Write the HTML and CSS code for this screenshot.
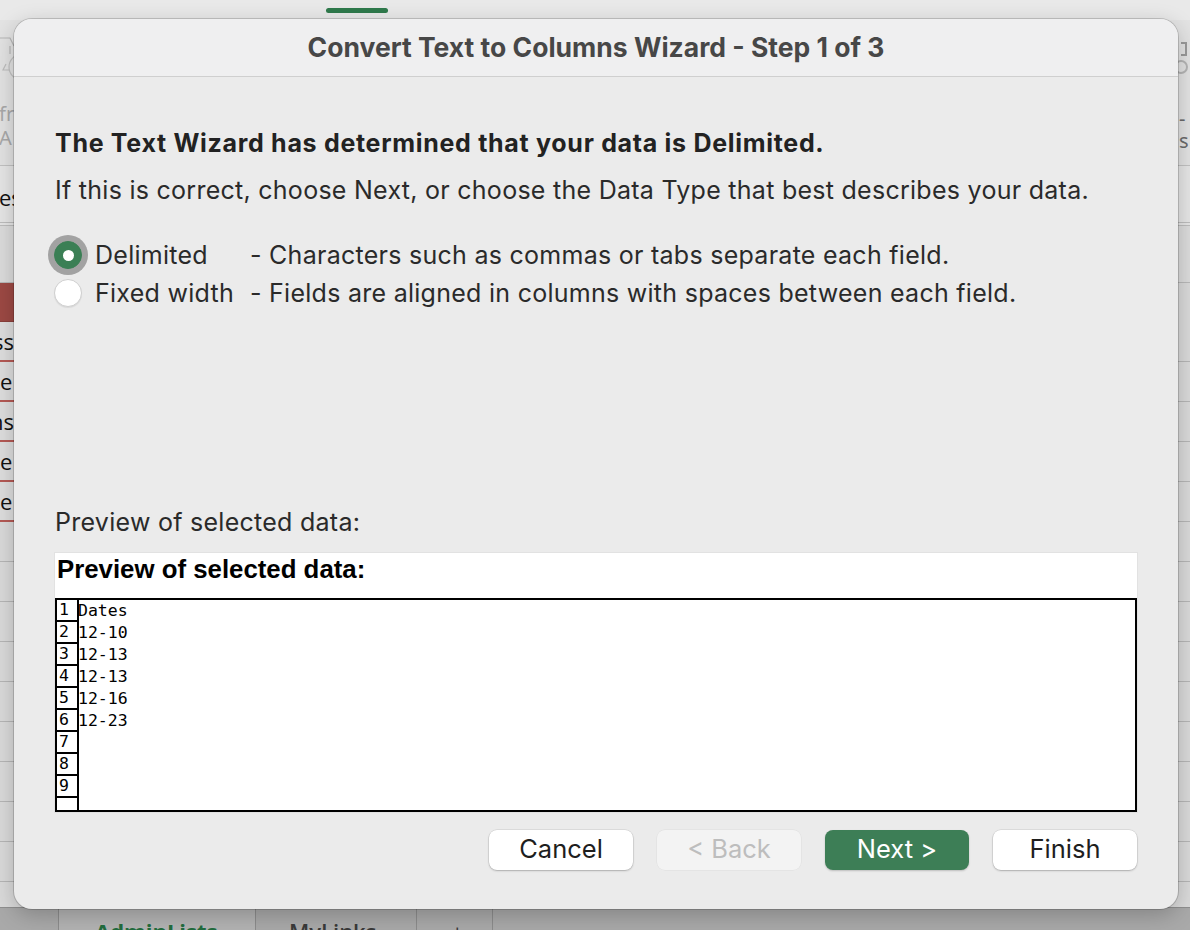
FILE: index.html
```html
<!DOCTYPE html>
<html lang="en">
<head>
<meta charset="utf-8">
<title>Convert Text to Columns Wizard</title>
<link rel="stylesheet" href="styles.css">
</head>
<body>
<div class="app">
  <div class="topbar"><span class="sheet-tab-mark"></span></div>
  <div class="ribbon">
    <div class="ribbon-left">
      <svg class="rib-icon" width="14" height="56" viewBox="0 0 14 56"><path d="M-4 4h14l4 8" fill="none" stroke="#b5b5b5" stroke-width="1.2"/><path d="M10 12v8" fill="none" stroke="#b5b5b5" stroke-width="1.2"/><circle cx="22" cy="33" r="13" fill="none" stroke="#c0c0c0" stroke-width="1.2"/><path d="M6 30l-3 6 6 0" fill="none" stroke="#bdbdbd" stroke-width="1.2"/></svg>
      <span class="rib-text">fr</span>
      <span class="rib-text">A</span>
    </div>
    <div class="ribbon-right">
      <span class="rib-bracket"></span>
      <span class="rib-circle"></span>
      <span class="rib-text2 rib-dash">-</span>
      <span class="rib-text2">s</span>
    </div>
  </div>
  <div class="formula"><span class="namebox">es</span></div>
  <div class="colhead"></div>
  <div class="row row-red"><span class="cell cell-red"></span><span class="cell-r"></span></div>
  <div class="row"><span class="cell cell-u">ss</span><span class="cell-r"></span></div>
  <div class="row"><span class="cell cell-u">e</span><span class="cell-r"></span></div>
  <div class="row"><span class="cell cell-u">ns</span><span class="cell-r"></span></div>
  <div class="row"><span class="cell cell-u">e</span><span class="cell-r"></span></div>
  <div class="row"><span class="cell cell-u">e</span><span class="cell-r"></span></div>
  <div class="row"><span class="cell"></span><span class="cell-r"></span></div>
  <div class="row"><span class="cell"></span><span class="cell-r"></span></div>
  <div class="row"><span class="cell"></span><span class="cell-r"></span></div>
  <div class="row"><span class="cell"></span><span class="cell-r"></span></div>
  <div class="row"><span class="cell"></span><span class="cell-r"></span></div>
  <div class="row"><span class="cell"></span><span class="cell-r"></span></div>
  <div class="row"><span class="cell"></span><span class="cell-r"></span></div>
  <div class="row"><span class="cell"></span><span class="cell-r"></span></div>
  <div class="row"><span class="cell"></span><span class="cell-r"></span></div>
  <div class="row row-last"><span class="cell"></span><span class="cell-r"></span></div>
  <div class="tabbar">
    <span class="tab tab-first"></span>
    <span class="tab tab-active">AdminLists</span>
    <span class="tab tab-links">MyLinks</span>
    <span class="tab tab-plus">+</span>
  </div>
</div>

<div class="dialog">
  <div class="titlebar">Convert Text to Columns Wizard - Step 1 of 3</div>
  <div class="dlg-body">
    <p class="heading">The Text Wizard has determined that your data is Delimited.</p>
    <p class="text sub">If this is correct, choose Next, or choose the Data Type that best describes your data.</p>
    <div class="options">
      <div class="option">
        <span class="radio radio-on"><span class="dot"></span></span>
        <span class="text opt-label">Delimited</span>
        <span class="text">- Characters such as commas or tabs separate each field.</span>
      </div>
      <div class="option">
        <span class="radio"></span>
        <span class="text opt-label">Fixed width</span>
        <span class="text">- Fields are aligned in columns with spaces between each field.</span>
      </div>
    </div>
    <p class="text preview-label">Preview of selected data:</p>
    <div class="preview">
      <div class="preview-head">Preview of selected data:</div>
      <div class="preview-table">
        <div class="nums">
          <span class="num">1</span><span class="num">2</span><span class="num">3</span><span class="num">4</span><span class="num">5</span><span class="num">6</span><span class="num">7</span><span class="num">8</span><span class="num">9</span><span class="num num-empty"></span>
        </div>
        <div class="data">
          <span class="line">Dates</span><span class="line">12-10</span><span class="line">12-13</span><span class="line">12-13</span><span class="line">12-16</span><span class="line">12-23</span>
        </div>
      </div>
    </div>
    <div class="buttons">
      <button class="btn">Cancel</button>
      <button class="btn btn-disabled">&lt; Back</button>
      <button class="btn btn-primary">Next &gt;</button>
      <button class="btn">Finish</button>
    </div>
  </div>
</div>
</body>
</html>
```

FILE: styles.css
```css
* { box-sizing: border-box; }
html, body { margin: 0; padding: 0; }
body {
  width: 1190px;
  height: 930px;
  overflow: hidden;
  position: relative;
  background: #d6d6d6;
  font-family: Inter, "Noto Sans", sans-serif;
}

/* ---------- background spreadsheet ---------- */
.app { display: flex; flex-direction: column; width: 1190px; height: 930px; }
.topbar {
  height: 20px;
  flex: none;
  background: #e9e9e9;
  padding: 8px 0 0 326px;
}
.sheet-tab-mark { display: block; width: 62px; height: 5px; border-radius: 3px; background: #2f7a4c; }

.ribbon {
  height: 146px;
  flex: none;
  background: #e3e3e3;
  border-bottom: 1px solid #c2c2c2;
  display: flex;
  justify-content: space-between;
}
.ribbon-left { width: 14px; display: flex; flex-direction: column; padding-top: 14px; overflow: hidden; }
.rib-icon { display: block; flex: none; }
.rib-text { font: 20px/24px "Noto Sans", sans-serif; color: #a9a9a9; margin-left: -1px; white-space: nowrap; }
.rib-text:first-of-type { margin-top: 12px; }
.ribbon-right { width: 12px; display: flex; flex-direction: column; padding-top: 22px; overflow: hidden; }
.rib-bracket { display: block; flex: none; width: 6px; height: 14px; border: 2px solid #9a9a9a; border-left: none; margin-left: 3px; }
.rib-circle { display: block; flex: none; width: 14px; height: 14px; border: 2px solid #b5b5b5; border-radius: 50%; margin: 4px 0 0 -4px; }
.rib-text2 { font: 20px/22px "Noto Sans", sans-serif; color: #6a6a6a; margin-left: 1px; }
.rib-dash { margin-top: 34px; }

.formula {
  height: 60px;
  flex: none;
  background: #e6e6e6;
  border-bottom: 4px double #bdbdbd;
  padding: 19px 0 0 0;
  overflow: hidden;
}
.namebox { font: 22px/24px "Open Sans", sans-serif; color: #111; margin-left: -1px; }

.colhead { height: 57px; flex: none; background: #dcdcdc; border-bottom: 1px solid #b9b9b9; }

.row {
  height: 40px;
  flex: none;
  display: flex;
  justify-content: space-between;
  background: #dadada;
}
.cell {
  width: 14px;
  height: 40px;
  border-bottom: 1px solid #b6b6b6;
  overflow: hidden;
  font: 22px/38px "Open Sans", sans-serif;
  color: #111;
  white-space: nowrap;
  direction: rtl;
  text-align: left;
}
.cell-u { border-bottom: 2px solid #b55a55; background: #dedede; }
.row-red { height: 39px; }
.cell-red { background: #9d4944; height: 39px; border-bottom: 1px solid #8a3f3b; }
.cell-r { width: 12px; height: 40px; border-bottom: 1px solid #b6b6b6; }
.row-last { height: 25px; }
.row-last .cell, .row-last .cell-r { height: 25px; border-bottom: none; }

.tabbar {
  flex: 1;
  background: #a9a9a9;
  border-top: 1px solid #8f8f8f;
  display: flex;
  overflow: hidden;
}
.tab {
  height: 100%;
  border-right: 1px solid #8c8c8c;
  font: 700 22px/1 "Open Sans", sans-serif;
  padding-top: 12px;
  white-space: nowrap;
}
.tab-first { width: 59px; }
.tab-active { width: 197px; color: #226d3e; padding-left: 36px; background: #b3b3b3; }
.tab-links { width: 161px; color: #3a3a3a; padding-left: 33px; font-weight: 600; }
.tab-plus { width: 76px; color: #3a3a3a; padding-left: 34px; font-weight: 400; }

/* ---------- dialog ---------- */
.dialog {
  position: absolute;
  left: 14px;
  top: 19px;
  width: 1164px;
  height: 890px;
  border-radius: 18px;
  background: #ebebeb;
  overflow: hidden;
  box-shadow: 0 0 0 1px rgba(0,0,0,0.16), 0 6px 22px rgba(0,0,0,0.22);
  display: flex;
  flex-direction: column;
}
.titlebar {
  height: 58px;
  flex: none;
  background: #efeff0;
  border-bottom: 1px solid #cfcfcf;
  display: flex;
  align-items: center;
  justify-content: center;
  font-weight: 700;
  font-size: 26.5px;
  color: #474747;
  padding-bottom: 2px;
}
.dlg-body {
  display: flex;
  flex-direction: column;
  padding: 51px 41px 0;
}
.heading {
  margin: 0;
  font-weight: 700;
  font-size: 25px;
  letter-spacing: 0.7px;
  line-height: 30px;
  color: #222;
  white-space: nowrap;
}
.text {
  font-size: 25px;
  letter-spacing: 0.27px;
  line-height: 30px;
  color: #2a2a2a;
  white-space: nowrap;
}
.sub { margin: 17px 0 0; }
.options { margin-top: 31px; display: flex; flex-direction: column; }
.option {
  height: 38px;
  display: flex;
  align-items: center;
}
.radio {
  width: 28px;
  height: 28px;
  flex: none;
  border-radius: 50%;
  background: #fff;
  border: 1px solid #cfcfcf;
  box-shadow: 0 1px 1px rgba(0,0,0,0.08);
  margin-left: -1px;
  margin-right: 13px;
  display: flex;
  align-items: center;
  justify-content: center;
}
.radio-on {
  background: #3b7f55;
  border-color: #3b7f55;
  box-shadow: 0 0 0 6px #a2a2a2;
}
.dot { width: 11px; height: 11px; border-radius: 50%; background: #fff; }
.opt-label { width: 155px; flex: none; }

.preview-label { margin: 195px 0 0; }
.preview {
  margin-top: 16px;
  height: 259px;
  background: #fff;
  outline: 1px solid #e2e2e2;
  display: flex;
  flex-direction: column;
}
.preview-head {
  height: 45px;
  flex: none;
  padding: 1px 0 0 2px;
  font: 700 25.8px/30px "Liberation Sans", Arial, sans-serif;
  color: #000;
}
.preview-table {
  flex: 1;
  border: 2px solid #000;
  display: flex;
  font-family: "DejaVu Sans Mono", monospace;
  font-size: 16.5px;
  color: #000;
}
.nums {
  width: 22px;
  flex: none;
  border-right: 2px solid #000;
  display: flex;
  flex-direction: column;
}
.num {
  height: 22px;
  flex: none;
  border-bottom: 2px solid #000;
  line-height: 20px;
  padding-left: 2px;
}
.num-empty { flex: 1; border-bottom: none; }
.data { display: flex; flex-direction: column; margin-left: -1px; }
.line { height: 22px; line-height: 21px; }

.buttons {
  margin-top: 18px;
  display: flex;
  justify-content: flex-end;
  gap: 24px;
}
.btn {
  width: 144px;
  height: 40px;
  border: none;
  border-radius: 8px;
  background: #fff;
  box-shadow: 0 0 0 0.5px rgba(0,0,0,0.12), 0 1px 2px rgba(0,0,0,0.22);
  font-family: Inter, "Noto Sans", sans-serif;
  font-size: 25.5px;
  color: #1e1e1e;
  padding: 0 0 3px;
}
.btn-disabled { background: #f3f3f3; color: #bdbdbd; box-shadow: 0 0 0 0.5px rgba(0,0,0,0.06); }
.btn-primary { background: #3d7e56; color: #fff; box-shadow: 0 1px 2px rgba(0,0,0,0.2); }
```
